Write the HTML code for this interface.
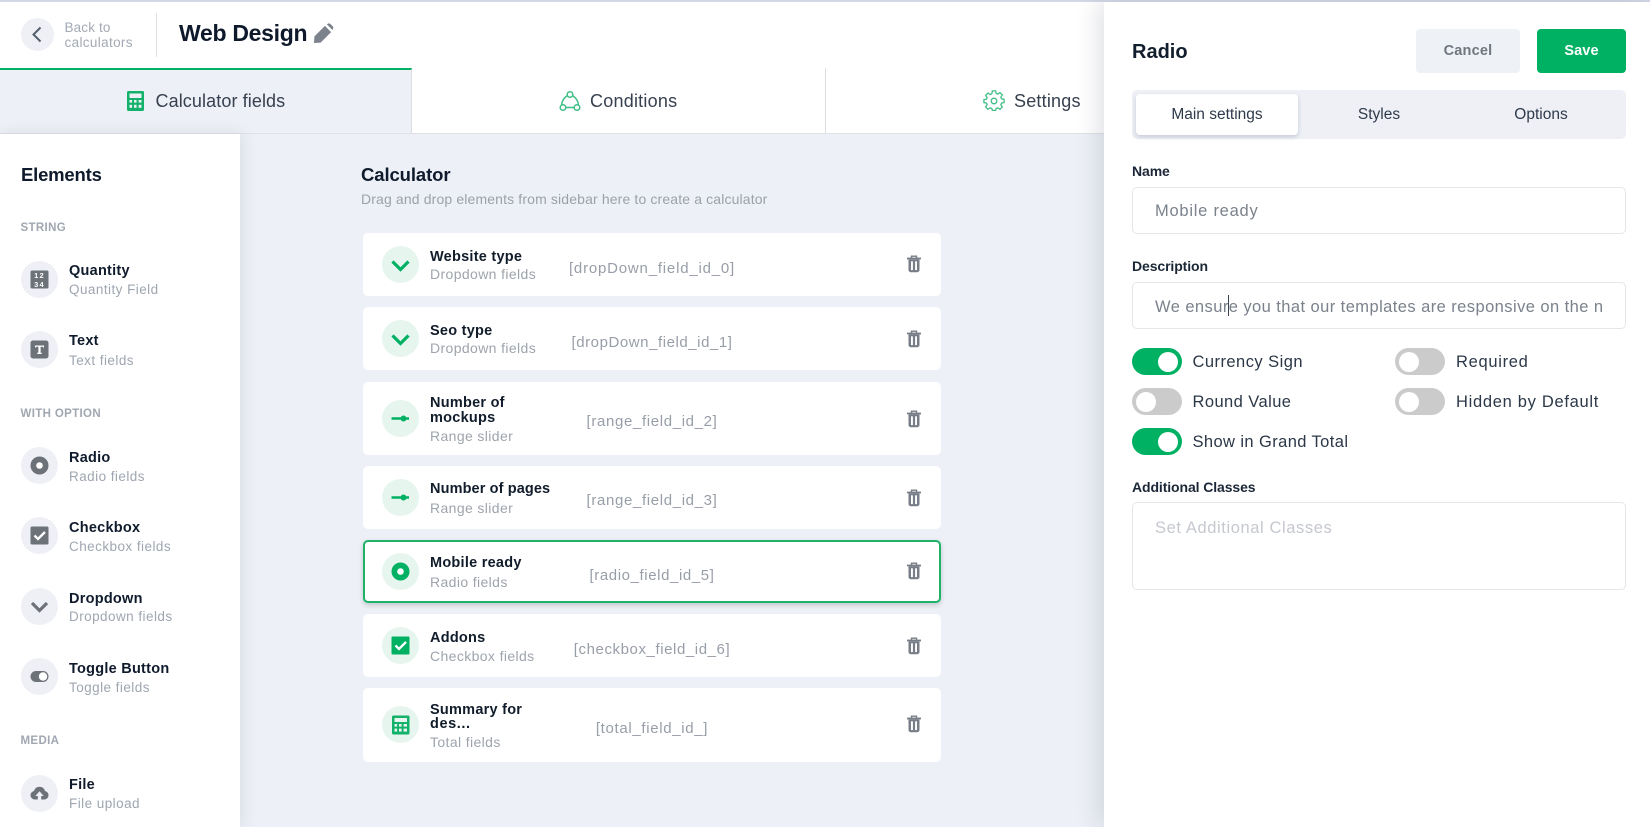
<!DOCTYPE html>
<html lang="en">
<head>
<meta charset="utf-8">
<title>Web Design - Calculator</title>
<style>
*{box-sizing:border-box;margin:0;padding:0}
html,body{width:1650px;height:827px;overflow:hidden;background:#edf0f6;font-family:"Liberation Sans",sans-serif}
body{position:relative}
div,span,svg{position:absolute}
.t{white-space:nowrap;line-height:1}
.strip{left:0;top:0;width:1650px;height:2px;background:#d4d8e6}
.top{left:0;top:2px;width:1650px;height:66px;background:#fff}
.tabs{left:0;top:68px;width:1650px;height:66px;background:#fff;border-bottom:1px solid #e0e1e4}
.tab1{left:0;top:68px;width:412px;height:66px;background:#edf0f6;border-top:2px solid #00b163;border-bottom:1px solid #e0e1e4;border-right:1px solid #dcdde0}
.sep{left:825px;top:68px;width:1px;height:65px;background:#dcdde0}
.tabt{font-size:18px;letter-spacing:.1px;color:#36404f}
.side{left:0;top:134px;width:240px;height:693px;background:#fff;box-shadow:2px 0 14px rgba(40,50,80,.1)}
.h{font-size:18.5px;font-weight:bold;color:#0f1b2c;letter-spacing:-.2px}
.sec{font-size:11.5px;font-weight:bold;letter-spacing:.35px;color:#a0a7b1}
.circ{width:37px;height:37px;border-radius:50%;background:#eef0f6;left:21px}
.circ svg,.gc svg{left:0;top:0;width:37px;height:37px}
.it{font-size:14.5px;font-weight:bold;color:#0f1b2c;letter-spacing:.25px;left:69px}
.is{font-size:13.5px;color:#9fa6b1;letter-spacing:.45px;left:69px}
.card{left:363px;width:578px;background:#fff;border-radius:5px}
.card.on{border:2px solid #1fb268;box-shadow:0 2px 5px rgba(30,60,60,.22)}
.gc{width:37px;height:37px;border-radius:50%;background:#e6f6ee;left:382px}
.ct{font-size:14.5px;font-weight:bold;color:#111c2b;letter-spacing:.25px;left:430px}
.cs{font-size:14px;color:#9ea4ad;letter-spacing:.38px;left:430px}
.id{left:363px;width:578px;text-align:center;font-size:15px;letter-spacing:.7px;color:#989ea8}
.tr{left:906px;width:16px;height:18px}
.panel{left:1104px;top:2px;width:546px;height:825px;background:#fff;box-shadow:-6px 0 22px rgba(40,50,80,.14)}
.btn{top:29px;height:44px;border-radius:4px}
.seg{left:1132px;top:90px;width:494px;height:49px;background:#eef0f6;border-radius:5px}
.act{left:1136px;top:94px;width:162px;height:41px;background:#fff;border-radius:4px;box-shadow:0 2px 5px rgba(60,70,100,.22)}
.segt{font-size:15.5px;letter-spacing:0;color:#2e3a4b;text-align:center}
.lab{left:1132px;font-size:14px;font-weight:bold;color:#1b2737;letter-spacing:-.1px}
.inp{left:1132px;width:494px;background:#fff;border:1.5px solid #e4e6e9;border-radius:5px}
.val{left:1155px;font-size:16.5px;color:#7b828c;letter-spacing:.43px}
.sw{width:50px;height:27px;border-radius:14px}
.sw.g{background:#00b163}
.sw.o{background:#cbcbcb}
.sw i{position:absolute;top:3.5px;width:20px;height:20px;border-radius:50%;background:#fff;display:block}
.sw.g i{left:26px}
.sw.o i{left:4px}
.sl{font-size:16.5px;color:#2c3848}
</style>
</head>
<body>
<div class="strip"></div>
<div class="top"></div>
<div style="left:21px;top:18px;width:33px;height:33px;border-radius:50%;background:#eef0f6"></div>
<svg style="left:21px;top:18px" width="33" height="33" viewBox="0 0 33 33"><path d="M19.5 9.5 L12.500 16.500 L19.500 23.500" fill="none" stroke="#55606e" stroke-width="2"/></svg>
<div class="t" style="left:64.500px;top:21px;font-size:13.500px;color:#a3a9b3;letter-spacing:.15px">Back to</div>
<div class="t" style="left:64.500px;top:36px;font-size:13.500px;color:#a3a9b3;letter-spacing:.35px">calculators</div>
<div style="left:156px;top:13px;width:1px;height:44px;background:#dfe1e5"></div>
<div class="t" style="left:179px;top:22px;font-size:23px;font-weight:bold;color:#0e1a2b;letter-spacing:-.3px">Web Design</div>
<svg style="left:313px;top:23px" width="21" height="21" viewBox="0 0 22 22"><path d="M1 21 L1.500 14 L12.500 3 L19 9.500 L8 20.500 Z" fill="#7d838c"/><path d="M14.500 1.500 L15.700 .6 Q17 0 18 .8 L21 3.800 Q21.800 4.800 21 6 L20.300 7.300 Z" fill="#7d838c"/></svg>

<div class="tabs"></div>
<div class="tab1"></div>
<div class="sep"></div>
<svg style="left:126px;top:90px" width="19" height="22" viewBox="0 0 19 22"><rect x="1" y="1" width="17" height="20" rx="1.500" fill="#13b26b"/><rect x="3.500" y="3.500" width="12" height="4.500" fill="#edf0f6"/><g fill="#edf0f6"><rect x="3.500" y="10" width="2.600" height="2.600"/><rect x="8" y="10" width="2.600" height="2.600"/><rect x="12.600" y="10" width="2.900" height="2.600"/><rect x="3.500" y="14.800" width="2.600" height="3"/><rect x="8" y="14.800" width="2.600" height="3"/><rect x="12.600" y="14.800" width="2.900" height="3"/></g></svg>
<div class="t tabt" style="left:155.500px;top:92px">Calculator fields</div>
<svg style="left:559px;top:90px" width="22" height="22" viewBox="0 0 22 22" fill="none" stroke="#3fbd85" stroke-width="1.500"><circle cx="11" cy="4.500" r="2.800"/><circle cx="4" cy="17.500" r="2.800"/><circle cx="18" cy="17.500" r="2.800"/><path d="M8.600 5.500 C4.500 8 2.800 11.500 2.600 15M13.400 5.500 C17.500 8 19.200 11.500 19.400 15M6.700 17.500 H15.300"/></svg>
<div class="t tabt" style="left:590px;top:92px;letter-spacing:.23px">Conditions</div>
<svg style="left:983px;top:90px" width="22" height="22" viewBox="0 0 22 22" fill="none" stroke="#3fbd85" stroke-width="1.300"><path d="M9.300 1.500h3.400l.5 2.600 1.700.7 2.200-1.500 2.400 2.400-1.500 2.200.7 1.700 2.600.5v3.400l-2.600.5-.7 1.700 1.500 2.200-2.400 2.400-2.200-1.500-1.700.7-.5 1.900H9.300l-.5-1.900-1.700-.7-2.200 1.500-2.400-2.400 1.500-2.200-.7-1.700-2.600-.5V10.500l2.600-.5.7-1.700-1.500-2.200 2.400-2.400 2.200 1.500 1.700-.7z" transform="translate(.2 -.6) scale(.98)"/><circle cx="11" cy="11" r="2.800"/></svg>
<div class="t tabt" style="left:1014px;top:92px;letter-spacing:.2px">Settings</div>

<div class="side"></div>
<div class="t h" style="left:21px;top:166px">Elements</div>
<div class="t sec" style="left:20.500px;top:223px">STRING</div>

<div class="circ" style="top:261px"><svg viewBox="0 0 37 37"><rect x="9.500" y="9.500" width="18" height="18" rx="1.500" fill="#6d7178"/><text x="18.500" y="17.200" text-anchor="middle" font-size="7.500" font-weight="bold" letter-spacing="1.200" fill="#fff" font-family="Liberation Sans">12</text><text x="18.500" y="26" text-anchor="middle" font-size="7.500" font-weight="bold" letter-spacing="1.200" fill="#fff" font-family="Liberation Sans">34</text></svg></div>
<div class="t it" style="top:264px">Quantity</div>
<div class="t is" style="top:283px">Quantity Field</div>

<div class="circ" style="top:331px"><svg viewBox="0 0 37 37"><rect x="9.500" y="9.500" width="18" height="18" rx="2.500" fill="#6d7178"/><path d="M14 14.500h9v2h-1l-.3-.8h-2.100v6h1.200v1.300h-4.600v-1.300h1.200v-6h-2.100l-.3.8h-1z" fill="#fff"/></svg></div>
<div class="t it" style="top:334px">Text</div>
<div class="t is" style="top:354px">Text fields</div>

<div class="t sec" style="left:20.500px;top:409px">WITH OPTION</div>

<div class="circ" style="top:447px"><svg viewBox="0 0 37 37"><circle cx="18.500" cy="18.500" r="9" fill="#6d7178"/><circle cx="18.500" cy="18.500" r="3.300" fill="#fff"/></svg></div>
<div class="t it" style="top:451px">Radio</div>
<div class="t is" style="top:470px">Radio fields</div>

<div class="circ" style="top:517px"><svg viewBox="0 0 37 37"><rect x="9.500" y="9.500" width="18" height="18" rx="1.500" fill="#6d7178"/><path d="M13.500 18.500l3.500 3.500 7-7" fill="none" stroke="#fff" stroke-width="2.300"/></svg></div>
<div class="t it" style="top:521px">Checkbox</div>
<div class="t is" style="top:540px">Checkbox fields</div>

<div class="circ" style="top:588px"><svg viewBox="0 0 37 37"><path d="M11 15l7.500 7.500 7.500-7.500" fill="none" stroke="#6d7178" stroke-width="3.200"/></svg></div>
<div class="t it" style="top:592px">Dropdown</div>
<div class="t is" style="top:610px">Dropdown fields</div>

<div class="circ" style="top:658px"><svg viewBox="0 0 37 37"><rect x="9.500" y="13" width="18" height="11" rx="5.500" fill="#6d7178"/><circle cx="22" cy="18.500" r="4.200" fill="#fff"/></svg></div>
<div class="t it" style="top:662px">Toggle Button</div>
<div class="t is" style="top:681px">Toggle fields</div>

<div class="t sec" style="left:20.500px;top:736px">MEDIA</div>

<div class="circ" style="top:775px"><svg viewBox="0 0 37 37"><path d="M13.500 24.500a4.300 4.300 0 0 1-.6-8.500 5.800 5.800 0 0 1 11.200 0 4.300 4.300 0 0 1-.6 8.500h-3.300v-3.500h2.500l-4.200-4.700-4.200 4.700h2.500v3.500z" fill="#6d7178"/></svg></div>
<div class="t it" style="top:778px">File</div>
<div class="t is" style="top:797px">File upload</div>

<div class="t h" style="left:361px;top:166px;letter-spacing:-.1px">Calculator</div>
<div class="t" style="left:361px;top:192px;font-size:14px;color:#9ba1ab;letter-spacing:.14px">Drag and drop elements from sidebar here to create a calculator</div>

<!-- card 1 -->
<div class="card" style="top:233px;height:63px"></div>
<div class="gc" style="top:246px"><svg viewBox="0 0 37 37"><path d="M10.500 15.500l8 8 8-8" fill="none" stroke="#00b163" stroke-width="3.200"/></svg></div>
<div class="t ct" style="top:250px">Website type</div>
<div class="t cs" style="top:267px">Dropdown fields</div>
<div class="t id" style="top:261px;letter-spacing:.8px">[dropDown_field_id_0]</div>
<svg class="tr" style="top:255px" viewBox="0 0 16 18"><use href="#trash"/></svg>

<!-- card 2 -->
<div class="card" style="top:307px;height:63px"></div>
<div class="gc" style="top:320px"><svg viewBox="0 0 37 37"><path d="M10.500 15.500l8 8 8-8" fill="none" stroke="#00b163" stroke-width="3.200"/></svg></div>
<div class="t ct" style="top:324px">Seo type</div>
<div class="t cs" style="top:341px">Dropdown fields</div>
<div class="t id" style="top:335px;letter-spacing:.56px">[dropDown_field_id_1]</div>
<svg class="tr" style="top:330px" viewBox="0 0 16 18"><use href="#trash"/></svg>

<!-- card 3 -->
<div class="card" style="top:382px;height:73px"></div>
<div class="gc" style="top:400px"><svg viewBox="0 0 37 37"><path d="M9.500 18.500h17.500" stroke="#00b163" stroke-width="2.600"/><circle cx="21.500" cy="18.500" r="3" fill="#00b163"/></svg></div>
<div class="t ct" style="top:396px">Number of</div>
<div class="t ct" style="top:411px">mockups</div>
<div class="t cs" style="top:429px">Range slider</div>
<div class="t id" style="top:414px;letter-spacing:.65px">[range_field_id_2]</div>
<svg class="tr" style="top:410px" viewBox="0 0 16 18"><use href="#trash"/></svg>

<!-- card 4 -->
<div class="card" style="top:466px;height:63px"></div>
<div class="gc" style="top:479px"><svg viewBox="0 0 37 37"><path d="M9.500 18.500h17.500" stroke="#00b163" stroke-width="2.600"/><circle cx="21.500" cy="18.500" r="3" fill="#00b163"/></svg></div>
<div class="t ct" style="top:482px;letter-spacing:.12px">Number of pages</div>
<div class="t cs" style="top:501px">Range slider</div>
<div class="t id" style="top:493px;letter-spacing:.65px">[range_field_id_3]</div>
<svg class="tr" style="top:489px" viewBox="0 0 16 18"><use href="#trash"/></svg>

<!-- card 5 -->
<div class="card on" style="top:540px;height:63px"></div>
<div class="gc" style="top:553px"><svg viewBox="0 0 37 37"><circle cx="18.500" cy="18.500" r="9" fill="#00b163"/><circle cx="18.500" cy="18.500" r="3.300" fill="#fff"/></svg></div>
<div class="t ct" style="top:556px">Mobile ready</div>
<div class="t cs" style="top:575px">Radio fields</div>
<div class="t id" style="top:568px;letter-spacing:.6px">[radio_field_id_5]</div>
<svg class="tr" style="top:562px" viewBox="0 0 16 18"><use href="#trash"/></svg>

<!-- card 6 -->
<div class="card" style="top:614px;height:63px"></div>
<div class="gc" style="top:627px"><svg viewBox="0 0 37 37"><rect x="9.500" y="9.500" width="18" height="18" rx="1" fill="#00b163"/><path d="M13.500 18.500l3.500 3.500 7-7" fill="none" stroke="#fff" stroke-width="2.300"/></svg></div>
<div class="t ct" style="top:631px">Addons</div>
<div class="t cs" style="top:649px">Checkbox fields</div>
<div class="t id" style="top:642px;letter-spacing:.58px">[checkbox_field_id_6]</div>
<svg class="tr" style="top:637px" viewBox="0 0 16 18"><use href="#trash"/></svg>

<!-- card 7 -->
<div class="card" style="top:688px;height:74px"></div>
<div class="gc" style="top:706px"><svg viewBox="0 0 37 37"><rect x="10" y="9.500" width="17.500" height="19" rx="1.500" fill="#13b26b"/><rect x="12.500" y="12" width="12.500" height="4" fill="#e6f6ee"/><g fill="#e6f6ee"><rect x="12.500" y="18" width="2.600" height="2.600"/><rect x="17" y="18" width="2.600" height="2.600"/><rect x="21.600" y="18" width="3.400" height="2.600"/><rect x="12.500" y="22.600" width="2.600" height="3"/><rect x="17" y="22.600" width="2.600" height="3"/><rect x="21.600" y="22.600" width="3.400" height="3"/></g></svg></div>
<div class="t ct" style="top:703px">Summary for</div>
<div class="t ct" style="top:717px;letter-spacing:.6px">des...</div>
<div class="t cs" style="top:735px">Total fields</div>
<div class="t id" style="top:721px;letter-spacing:.67px">[total_field_id_]</div>
<svg class="tr" style="top:715px" viewBox="0 0 16 18"><use href="#trash"/></svg>

<svg width="0" height="0" style="left:0;top:0"><defs><g id="trash"><path d="M1 3.500h14" stroke="#787e87" stroke-width="1.800"/><path d="M5.500 3V1.200h5V3" fill="none" stroke="#787e87" stroke-width="1.400"/><path d="M2.500 4.500h11V15a2.200 2.200 0 0 1-2.200 2.200H4.700A2.200 2.200 0 0 1 2.500 15z" fill="#787e87"/><rect x="5" y="6.300" width="1.900" height="8.800" fill="#fff"/><rect x="9.100" y="6.300" width="1.900" height="8.800" fill="#fff"/></g></defs></svg>

<!-- right panel -->
<div class="panel"></div>
<div class="t" style="left:1132px;top:42px;font-size:20px;font-weight:bold;color:#121e2e">Radio</div>
<div class="btn" style="left:1416px;width:104px;background:#eef1f6"></div>
<div class="t" style="left:1416px;width:104px;text-align:center;top:44px;font-size:14.500px;font-weight:bold;color:#6f7680;letter-spacing:.2px">Cancel</div>
<div class="btn" style="left:1537px;width:89px;background:#00b163"></div>
<div class="t" style="left:1537px;width:89px;text-align:center;top:44px;font-size:14.500px;font-weight:bold;color:#fff;letter-spacing:.1px">Save</div>

<div class="seg"></div>
<div class="act"></div>
<div class="t segt" style="left:1136px;width:162px;top:107px">Main settings</div>
<div class="t segt" style="left:1298px;width:162px;top:107px">Styles</div>
<div class="t segt" style="left:1460px;width:162px;top:107px">Options</div>

<div class="t lab" style="top:164px">Name</div>
<div class="inp" style="top:187px;height:47px"></div>
<div class="t val" style="top:203px;letter-spacing:.75px">Mobile ready</div>

<div class="t lab" style="top:259px">Description</div>
<div class="inp" style="top:282px;height:47px"></div>
<div class="t val" style="top:299px;width:449px;overflow:hidden">We ensure you that our templates are responsive on the next</div>
<div style="left:1228px;top:295px;width:1px;height:21px;background:#3a4350"></div>

<div class="sw g" style="left:1132px;top:348px"><i></i></div>
<div class="t sl" style="left:1192.500px;top:354px;letter-spacing:.46px">Currency Sign</div>
<div class="sw o" style="left:1395px;top:348px"><i></i></div>
<div class="t sl" style="left:1456px;top:354px;letter-spacing:.7px">Required</div>
<div class="sw o" style="left:1132px;top:388px"><i></i></div>
<div class="t sl" style="left:1192.500px;top:394px;letter-spacing:.43px">Round Value</div>
<div class="sw o" style="left:1395px;top:388px"><i></i></div>
<div class="t sl" style="left:1456px;top:394px;letter-spacing:.7px">Hidden by Default</div>
<div class="sw g" style="left:1132px;top:428px"><i></i></div>
<div class="t sl" style="left:1192.500px;top:434px;letter-spacing:.4px">Show in Grand Total</div>

<div class="t lab" style="top:480px">Additional Classes</div>
<div class="inp" style="top:502px;height:88px"></div>
<div class="t val" style="top:520px;color:#c5c9cf;letter-spacing:.6px">Set Additional Classes</div>
</body>
</html>
